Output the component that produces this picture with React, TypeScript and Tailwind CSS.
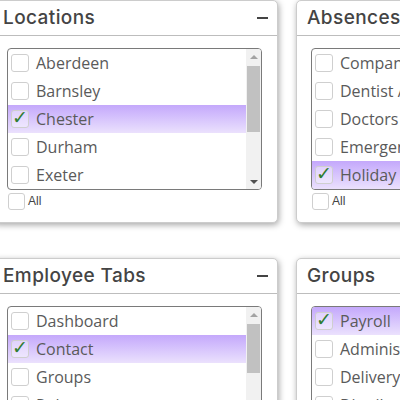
import React from "react";

type Item = { label: string; checked?: boolean };

function Check({ checked, small }: { checked?: boolean; small?: boolean }) {
  return (
    <span
      className={
        (small ? "h-[17px] w-[17px]" : "h-[18px] w-[18px]") +
        " relative flex shrink-0 items-center justify-center rounded-[3px] border border-[#cfcfcf] bg-white/40"
      }
    >
      {checked && (
        <span className="-mt-[3px] text-[19px] font-bold leading-none font-['DejaVu_Sans',sans-serif] text-[#2f7d2f]">✓</span>
      )}
    </span>
  );
}

function Scrollbar({ thumbTop, thumbHeight }: { thumbTop: number; thumbHeight: number }) {
  return (
    <div className="flex w-[15px] shrink-0 flex-col bg-[#f1f1f1]">
      <div className="flex h-[15px] items-center justify-center">
        <div className="h-0 w-0 border-x-[4px] border-b-[4px] border-x-transparent border-b-[#a3a3a3]" />
      </div>
      <div className="flex-1 px-[1px]" style={{ paddingTop: thumbTop }}>
        <div className="w-full bg-[#c1c1c1]" style={{ height: thumbHeight }} />
      </div>
      <div className="flex h-[15px] items-center justify-center">
        <div className="h-0 w-0 border-x-[4px] border-t-[4px] border-x-transparent border-t-[#505050]" />
      </div>
    </div>
  );
}

function Panel({
  title,
  items,
  thumbTop,
  thumbHeight,
}: {
  title: string;
  items: Item[];
  thumbTop: number;
  thumbHeight: number;
}) {
  return (
    <div className="h-[223px] w-[286px] rounded-[5px] border border-[#cccccc] bg-white shadow-[1px_2px_6px_rgba(0,0,0,0.35)]">
      <div className="flex h-[35px] items-center justify-between border-b border-[#bdbdbd] pl-[10px] pr-[9px]">
        <h2 className="font-['Inter',sans-serif] text-[19px] font-medium tracking-[0.4px] text-[#444444]">{title}</h2>
        <div className="h-[2px] w-[11px] bg-[#444444]" />
      </div>
      <div className="ml-[14px] mr-[15px] mt-[12px] flex h-[142px] overflow-hidden rounded-[4px] border border-[#7a7a7a]">
        <div className="min-w-0 flex-1">
          {items.map((it) => (
            <div
              key={it.label}
              className={
                "flex h-[28px] items-center gap-[7px] pl-[3px] " +
                (it.checked ? "bg-gradient-to-b from-[#c4a8fb] to-[#ebe1fd]" : "")
              }
            >
              <Check checked={it.checked} />
              <span className="whitespace-nowrap font-['Open_Sans',sans-serif] text-[16px] text-[#5a5a5a]">
                {it.label}
              </span>
            </div>
          ))}
        </div>
        <Scrollbar thumbTop={thumbTop} thumbHeight={thumbHeight} />
      </div>
      <div className="ml-[15px] mt-[2px] flex items-center gap-[3px]">
        <Check small />
        <span className="font-['Liberation_Sans',sans-serif] text-[12px] text-[#444444]">All</span>
      </div>
    </div>
  );
}

export default function App() {
  return (
    <div className="relative h-[400px] w-[400px] overflow-hidden bg-white">
      <div className="-ml-[8px] grid grid-cols-[286px_286px] gap-x-[18px] gap-y-[35px]">
        <Panel
          title="Locations"
          thumbTop={2}
          thumbHeight={66}
          items={[
            { label: "Aberdeen" },
            { label: "Barnsley" },
            { label: "Chester", checked: true },
            { label: "Durham" },
            { label: "Exeter" },
          ]}
        />
        <Panel
          title="Absences"
          thumbTop={2}
          thumbHeight={60}
          items={[
            { label: "Company Event" },
            { label: "Dentist Appointment" },
            { label: "Doctors Appointment" },
            { label: "Emergency Leave" },
            { label: "Holiday", checked: true },
          ]}
        />
        <Panel
          title="Employee Tabs"
          thumbTop={2}
          thumbHeight={49}
          items={[
            { label: "Dashboard" },
            { label: "Contact", checked: true },
            { label: "Groups" },
            { label: "Roles" },
            { label: "Skills" },
          ]}
        />
        <Panel
          title="Groups"
          thumbTop={2}
          thumbHeight={60}
          items={[
            { label: "Payroll", checked: true },
            { label: "Administration" },
            { label: "Delivery" },
            { label: "Distribution" },
            { label: "Sales" },
          ]}
        />
      </div>
    </div>
  );
}
